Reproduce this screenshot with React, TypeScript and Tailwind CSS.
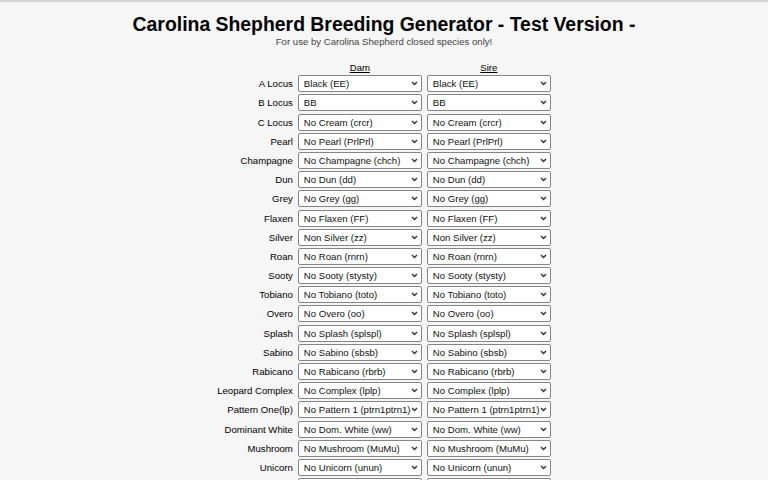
import React, { useState } from "react";

type Locus = { label: string; options: string[] };

const loci: Locus[] = [
  { label: "A Locus", options: ["Black (EE)", "Bay (AA)", "Seal Brown (AtAt)"] },
  { label: "B Locus", options: ["BB", "Bb", "bb"] },
  { label: "C Locus", options: ["No Cream (crcr)", "Single Cream (Crcr)", "Double Cream (CrCr)"] },
  { label: "Pearl", options: ["No Pearl (PrlPrl)", "Pearl Carrier (Prlprl)", "Pearl (prlprl)"] },
  { label: "Champagne", options: ["No Champagne (chch)", "Champagne (Chch)", "Champagne (ChCh)"] },
  { label: "Dun", options: ["No Dun (dd)", "Dun (Dd)", "Dun (DD)"] },
  { label: "Grey", options: ["No Grey (gg)", "Grey (Gg)", "Grey (GG)"] },
  { label: "Flaxen", options: ["No Flaxen (FF)", "Flaxen Carrier (Ff)", "Flaxen (ff)"] },
  { label: "Silver", options: ["Non Silver (zz)", "Silver (Zz)", "Silver (ZZ)"] },
  { label: "Roan", options: ["No Roan (rnrn)", "Roan (Rnrn)", "Roan (RnRn)"] },
  { label: "Sooty", options: ["No Sooty (stysty)", "Sooty (Stysty)", "Sooty (StySty)"] },
  { label: "Tobiano", options: ["No Tobiano (toto)", "Tobiano (Toto)", "Tobiano (ToTo)"] },
  { label: "Overo", options: ["No Overo (oo)", "Overo (Oo)"] },
  { label: "Splash", options: ["No Splash (splspl)", "Splash (Splspl)", "Splash (SplSpl)"] },
  { label: "Sabino", options: ["No Sabino (sbsb)", "Sabino (Sbsb)", "Sabino (SbSb)"] },
  { label: "Rabicano", options: ["No Rabicano (rbrb)", "Rabicano (Rbrb)", "Rabicano (RbRb)"] },
  { label: "Leopard Complex", options: ["No Complex (lplp)", "Leopard (Lplp)", "Leopard (LpLp)"] },
  { label: "Pattern One(lp)", options: ["No Pattern 1 (ptrn1ptrn1)", "Pattern 1 (Ptrn1ptrn1)", "Pattern 1 (Ptrn1Ptrn1)"] },
  { label: "Dominant White", options: ["No Dom. White (ww)", "Dom. White (Ww)"] },
  { label: "Mushroom", options: ["No Mushroom (MuMu)", "Mushroom Carrier (Mumu)", "Mushroom (mumu)"] },
  { label: "Unicorn", options: ["No Unicorn (unun)", "Unicorn (Unun)", "Unicorn (UnUn)"] },
  { label: "Wings", options: ["No Wings (wgwg)", "Wings (Wgwg)", "Wings (WgWg)"] },
];

const Picker: React.FC<{ options: string[] }> = ({ options }) => {
  const [value, setValue] = useState(options[0]);
  return (
    <div className="relative h-[17px] w-[124px]">
      <select
        value={value}
        onChange={(e) => setValue(e.target.value)}
        className="h-full w-full appearance-none rounded-[2px] border border-[#858585] bg-white pl-[5px] pr-[9px] text-[9.6px] leading-[15px] text-[#111]"
      >
        {options.map((o) => (
          <option key={o} value={o}>
            {o}
          </option>
        ))}
      </select>
      {/* small chevron */}
      <svg
        className="pointer-events-none absolute right-[4px] top-[6px]"
        width="7"
        height="5"
        viewBox="0 0 7 5"
      >
        <path d="M1 1 L3.5 3.5 L6 1" fill="none" stroke="#333" strokeWidth="1.4" />
      </svg>
    </div>
  );
};

const App: React.FC = () => {
  return (
    <div
      className="min-h-screen border-t-2 border-[#d4d4d4] bg-[#f6f6f6] pb-6 text-black"
      style={{ fontFamily: '"Liberation Sans", Arial, sans-serif' }}
    >
      {/* Header */}
      <div className="pt-[11px] text-center">
        <h1 className="text-[19.4px] font-bold leading-[22px]">
          Carolina Shepherd Breeding Generator - Test Version -
        </h1>
        <p className="text-[9.6px] leading-[14px] text-[#444]">
          For use by Carolina Shepherd closed species only!
        </p>
      </div>

      {/* Gene table */}
      <div className="mx-auto mt-[13px] grid w-fit grid-cols-[auto_124px_124px] items-center gap-x-[5px] gap-y-[2.2px] text-[9.6px]">
        <div />
        <div className="text-center leading-[11px] underline">Dam</div>
        <div className="text-center leading-[11px] underline">Sire</div>
        {loci.map((l) => (
          <React.Fragment key={l.label}>
            <div className="text-right leading-[17px]">{l.label}</div>
            <Picker options={l.options} />
            <Picker options={l.options} />
          </React.Fragment>
        ))}
      </div>
    </div>
  );
};

export default App;
